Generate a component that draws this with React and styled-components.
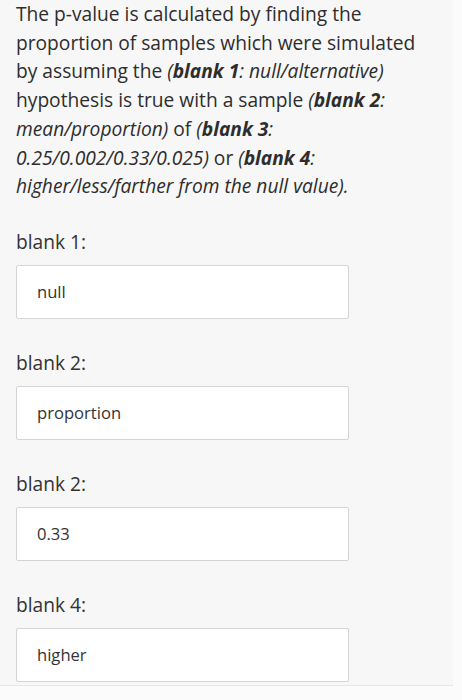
import styled, { createGlobalStyle } from "styled-components";

const GlobalStyle = createGlobalStyle`
  html, body {
    margin: 0;
    padding: 0;
    background: #fbfbfb;
  }
  body {
    font-family: "Open Sans", "Liberation Sans", sans-serif;
    color: #333;
  }
`;

const blanks = [
  { label: "blank 1:", value: "null" },
  { label: "blank 2:", value: "proportion" },
  { label: "blank 2:", value: "0.33" },
  { label: "blank 4:", value: "higher" },
];

export default function App() {
  return (
    <>
      <GlobalStyle />
      <Panel>
        <Question>
          The p-value is calculated by finding the proportion of samples which
          were simulated by assuming the{" "}
          <Choice>(<b>blank 1</b>: null/alternative)</Choice> hypothesis is
          true with a sample{" "}
          <Choice>(<b>blank 2</b>: mean/proportion)</Choice> of{" "}
          <Choice>(<b>blank 3</b>: 0.25/0.002/0.33/0.025)</Choice> or{" "}
          <Choice>(<b>blank 4</b>: higher/less/farther from the null value).</Choice>
        </Question>
        {blanks.map((item, i) => (
          <Field key={i}>
            <Label>{item.label}</Label>
            <AnswerBox>{item.value}</AnswerBox>
          </Field>
        ))}
      </Panel>
    </>
  );
}

const Panel = styled.div`
  width: 453px;
  height: 686px;
  box-sizing: border-box;
  background: #f7f7f7;
  border-bottom: 1px solid #e6e6e6;
  padding: 0 0 0 16px;
  overflow: hidden;
`;

const Question = styled.p`
  margin: 0 0 27px 0;
  width: 420px;
  font-size: 19.2px;
  line-height: 28.7px;
  color: #2d2d2d;
`;

const Choice = styled.i`
  font-style: italic;

  b {
    font-weight: 700;
  }
`;

const Field = styled.div`
  display: flex;
  flex-direction: column;
  margin-bottom: 30px;
`;

const Label = styled.div`
  font-size: 19.2px;
  line-height: 28px;
  margin-bottom: 9px;
`;

const AnswerBox = styled.div`
  width: 333px;
  height: 54px;
  box-sizing: border-box;
  background: #fff;
  border: 1px solid #d4d4d4;
  border-radius: 2px;
  padding: 0 20px;
  display: flex;
  align-items: center;
  font-size: 16.6px;
  color: #333;
`;
